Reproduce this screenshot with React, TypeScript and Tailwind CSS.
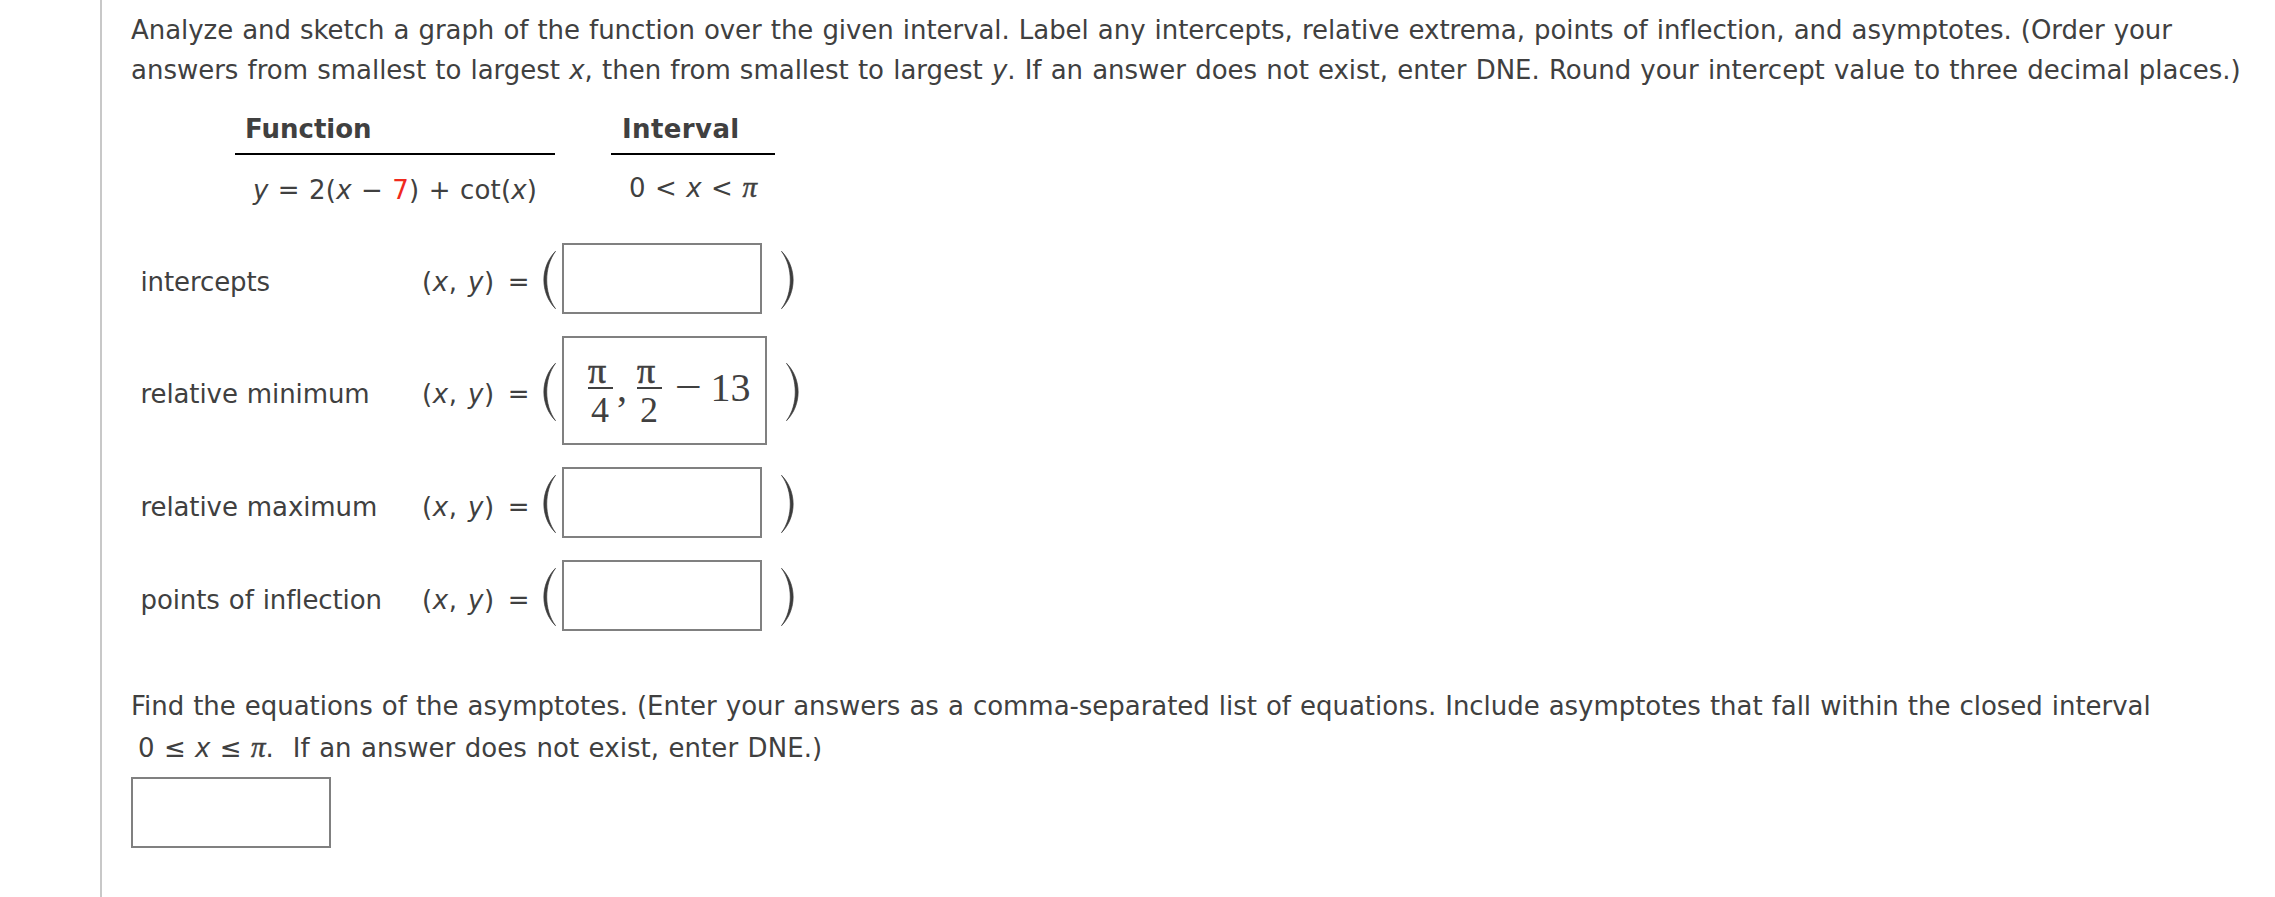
import type { ReactNode } from "react";

const Paren = ({ flip = false }: { flip?: boolean }) => (
  <svg
    className={flip ? "shrink-0 -scale-x-100" : "shrink-0"}
    width="14"
    height="58"
    viewBox="0 0 14 58"
  >
    <path
      d="M12.5 0.3C-3 16 -3 42 12.5 57.7C0.8 42 0.8 16 12.5 0.3Z"
      fill="#3c3c3c"
      stroke="#3c3c3c"
      strokeWidth="0.7"
    />
  </svg>
);

const Blank = () => (
  <div className="w-[200px] h-[71px] shrink-0 border-2 border-[#808080] bg-white" />
);

const Fraction = ({ top, bottom }: { top: string; bottom: string }) => (
  <span className="flex flex-col w-[25px] text-[36px]">
    <span className="h-[31px] leading-[31px] [-webkit-text-stroke:0.6px_#404040]">{top}</span>
    <span className="h-[2px] bg-[#404040]" />
    <span className="h-[42px] leading-[42px] pl-[3px]">{bottom}</span>
  </span>
);

const AnswerRow = ({
  label,
  low = false,
  children,
}: {
  label: string;
  low?: boolean;
  children: ReactNode;
}) => (
  <div className="flex items-center">
    <div className={low ? "flex pt-[9px]" : "flex pt-[7px]"}>
      <div className="w-[282px] pl-[0.5px] tracking-[-0.1px] [word-spacing:0.9px]">{label}</div>
      <div className="w-[121px] tracking-[0.6px] [word-spacing:1.4px]">
        (<i>x</i>, <i>y</i>)<span className="ml-[13px]">=</span>
      </div>
    </div>
    <div className="pt-[3px] mr-[5px]">
      <Paren />
    </div>
    {children}
    <div className="pt-[3px] ml-[18px]">
      <Paren flip />
    </div>
  </div>
);

const Pi = () => (
  <i className="font-['Liberation_Serif',serif] text-[29px] leading-none [-webkit-text-stroke:0.5px_#404040]">π</i>
);

const App = () => {
  return (
    <div className="h-[897px] overflow-hidden bg-white">
      <main className="ml-[100px] h-full border-l-2 border-[#c8c8c8] pl-[29px] pt-[10px] font-['DejaVu_Sans',sans-serif] text-[26px] leading-[40px] text-[#404040] whitespace-nowrap">
        <p className="tracking-[-0.055px] [word-spacing:0.9px]">
          Analyze and sketch a graph of the function over the given interval. Label any intercepts, relative extrema, points of inflection, and asymptotes. (Order your
        </p>
        <p className="tracking-[-0.01px] [word-spacing:0.9px]">
          answers from smallest to largest <i>x</i>, then from smallest to largest <i>y</i>. If an answer does not exist, enter DNE. Round your intercept value to three decimal places.)
        </p>

        {/* Function and interval */}
        <div className="flex gap-[56px] mt-[19px] ml-[104px]">
          <div className="w-[320px]">
            <div className="h-[46px] border-b-2 border-black pl-[10px] font-bold">Function</div>
            <div className="mt-[15px] pl-[18px] tracking-[0.2px] [word-spacing:0.8px]">
              <i>y</i> = 2(<i>x</i> − <span className="text-[#f02a1d]">7</span>) + cot(<i>x</i>)
            </div>
          </div>
          <div className="w-[164px]">
            <div className="h-[46px] border-b-2 border-black pl-[11px] font-bold tracking-[0.4px]">Interval</div>
            <div className="mt-[13px] h-[42px] pl-[18px] [word-spacing:1.2px]">
              0 &lt; <i>x</i> &lt; <Pi />
            </div>
          </div>
        </div>

        {/* Answers */}
        <div className="flex flex-col gap-[22px] mt-[33px] ml-[9px]">
          <AnswerRow label="intercepts">
            <Blank />
          </AnswerRow>
          <AnswerRow label="relative minimum">
            <div className="flex w-[205px] h-[109px] shrink-0 border-2 border-[#808080] pl-[24px] pt-[18px] font-['Liberation_Serif',serif] text-[40px]">
              <Fraction top="π" bottom="4" />
              <span className="w-[24px] pl-[4px] pt-[12px]">,</span>
              <Fraction top="π" bottom="2" />
              <span className="ml-[15px] mt-[11px] scale-x-[1.2]">−</span>
              <span className="ml-[11px] mt-[12px]">13</span>
            </div>
          </AnswerRow>
          <AnswerRow label="relative maximum" low>
            <Blank />
          </AnswerRow>
          <AnswerRow label="points of inflection" low>
            <Blank />
          </AnswerRow>
        </div>

        {/* Asymptotes */}
        <p className="mt-[55px] tracking-[-0.045px] [word-spacing:0.9px]">
          Find the equations of the asymptotes. (Enter your answers as a comma-separated list of equations. Include asymptotes that fall within the closed interval
        </p>
        <p className="mt-[2px] h-[40px] pl-[7px] [word-spacing:1.1px]">
          0 ≤ <i>x</i> ≤ <Pi />.<span className="ml-[19px] tracking-[0.06px]">If an answer does not exist, enter DNE.)</span>
        </p>
        <div className="mt-[9px]">
          <Blank />
        </div>
      </main>
    </div>
  );
};

export default App;
